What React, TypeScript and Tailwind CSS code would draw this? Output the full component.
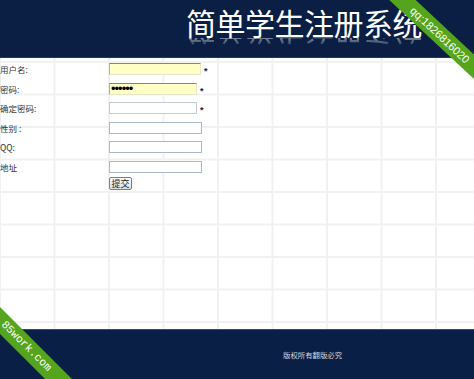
import { useState } from "react";

const fields = [
  { label: "用户名:", type: "text", width: "w-[92px]", tone: "yellow", required: true },
  { label: "密码:", type: "password", width: "w-[88px]", tone: "yellow", required: true },
  { label: "确定密码:", type: "password", width: "w-[88px]", tone: "plain", required: true },
  { label: "性别 :", type: "text", width: "w-[93px]", tone: "blue" },
  { label: "QQ:", type: "text", width: "w-[93px]", tone: "blue" },
  { label: "地址", type: "text", width: "w-[93px]", tone: "blue" },
];

const inputTone: Record<string, string> = {
  yellow: "bg-[#ffffc6] border border-[#e6e6c8] border-t-[#8c8470] border-l-[#b8b094]",
  plain: "bg-white border border-[#c4cbd2]",
  blue: "bg-white border border-[#a9b9c9]",
};

const cjk = { fontFamily: '"Noto Sans CJK SC", sans-serif' };

export default function App() {
  const [values, setValues] = useState<Record<number, string>>({ 1: "123456" });

  return (
    <div
      className="relative w-full h-[379px] overflow-hidden bg-white"
      style={{ fontFamily: '"Liberation Sans", "Noto Sans CJK SC", sans-serif' }}
    >
      {/* Header */}
      <div className="h-[58px] bg-[#0b1f45] border-b border-[#25375c] pl-[186px] pt-[6px]">
        <div className="text-[30px] leading-[32px] text-white tracking-[-0.5px]" style={cjk}>
          简单学生注册系统
        </div>
        <div className="h-[11px] overflow-hidden [mask-image:linear-gradient(to_bottom,rgba(0,0,0,0.45),transparent)]">
          <div className="text-[30px] leading-[32px] text-white tracking-[-0.5px] scale-y-[-1] -mt-[22px]" style={cjk}>
            简单学生注册系统
          </div>
        </div>
      </div>

      {/* Form over grid */}
      <div className="h-[271px] pt-[5px] bg-[linear-gradient(to_right,#f1f1f1_2px,transparent_2px),linear-gradient(to_bottom,#f1f1f1_2px,transparent_2px)] bg-size-[54.5px_32.5px] bg-position-[-1px_3px]">
        {fields.map((f, i) => (
          <div key={f.label} className={`flex items-start ${i === 5 ? "h-[16px]" : "h-[19.6px]"}`}>
            <div className="w-[109px] text-[8.5px] leading-[12px] text-[#333]" style={cjk}>
              {f.label}
            </div>
            <input
              type={f.type}
              value={values[i] ?? ""}
              onChange={(e) => setValues({ ...values, [i]: e.target.value })}
              className={`${f.width} h-[12px] ${f.type === "password" ? "text-[13px] tracking-[-1px]" : "text-[10px]"} leading-[10px] py-0 px-[1px] outline-none ${inputTone[f.tone]}`}
            />
            {f.required && (
              <span className="ml-[3px] mt-[4px] text-[9px] leading-[9px] font-bold text-[#222]">*</span>
            )}
          </div>
        ))}
        <div className="flex pl-[109px]">
          <button
            className="h-[13px] w-[23px] text-[9px] leading-[11px] text-[#222] border border-[#6f8094] rounded-[2px] bg-[linear-gradient(to_bottom,#fbfbfb,#dedede)]"
            style={cjk}
          >
            提交
          </button>
        </div>
      </div>

      {/* Footer */}
      <div className="h-[50px] bg-[#0a1f45] border-t border-[#3a4a66] flex items-center pl-[283px]">
        <span className="text-[7.4px] leading-[10px] text-[#d4d8e0]" style={cjk}>
          版权所有翻版必究
        </span>
      </div>

      {/* Ribbons */}
      <div className="absolute left-[360px] top-[26px] w-[160px] h-[18px] rotate-[43deg] bg-[#55a41d] flex items-center justify-center text-white text-[11px] leading-[18px]">
        qq:1826816020
      </div>
      <div
        className="absolute left-[-44px] top-[337px] w-[140px] h-[19px] rotate-[45deg] bg-[#55a41d] flex items-center justify-center text-white text-[11px] leading-[19px]"
        style={{ fontFamily: '"Liberation Mono", monospace' }}
      >
        85work.com
      </div>
    </div>
  );
}
